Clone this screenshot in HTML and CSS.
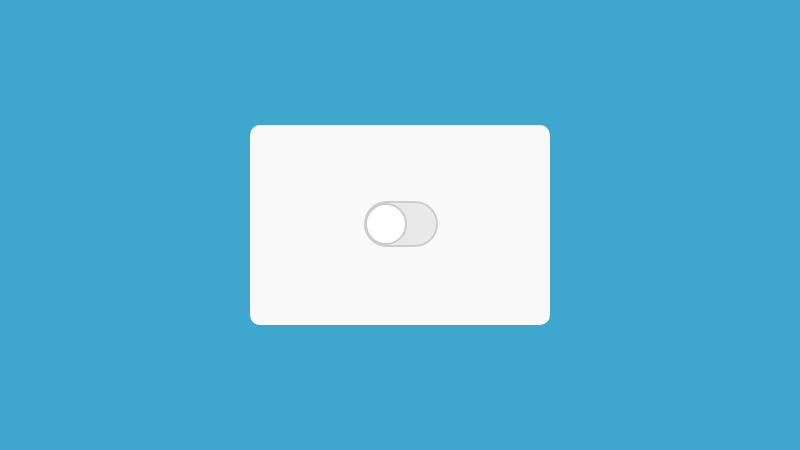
FILE: index.html
```html
<!DOCTYPE html>
<html>
<head>
<meta charset="utf-8">
<link rel="stylesheet" href="styles.css">
</head>
<body>
<div class="card">
  <label class="switch">
    <input type="checkbox" class="switch-input">
    <span class="switch-track"><span class="switch-knob"></span></span>
  </label>
</div>
</body>
</html>
```

FILE: styles.css
```css
html, body {
  margin: 0;
  height: 100%;
}
body {
  background: #3fa6cd;
  display: flex;
  align-items: center;
  justify-content: center;
  font-family: "Liberation Sans", sans-serif;
}
.card {
  width: 300px;
  height: 200px;
  background: #f9f9f9;
  border-radius: 10px;
  display: flex;
  align-items: center;
  justify-content: center;
}
.switch {
  display: block;
  cursor: pointer;
  margin-left: 2px;
  margin-top: -2px;
}
.switch-input {
  display: none;
}
.switch-track {
  display: flex;
  align-items: center;
  box-sizing: border-box;
  width: 74px;
  height: 46px;
  border: 2px solid #cdcdcd;
  border-radius: 23px;
  background: #e9e9e9;
}
.switch-knob {
  box-sizing: border-box;
  width: 42px;
  height: 42px;
  margin-left: -1px;
  border-radius: 50%;
  background: #fff;
  border: 2px solid #cbcbcb;
}
```
